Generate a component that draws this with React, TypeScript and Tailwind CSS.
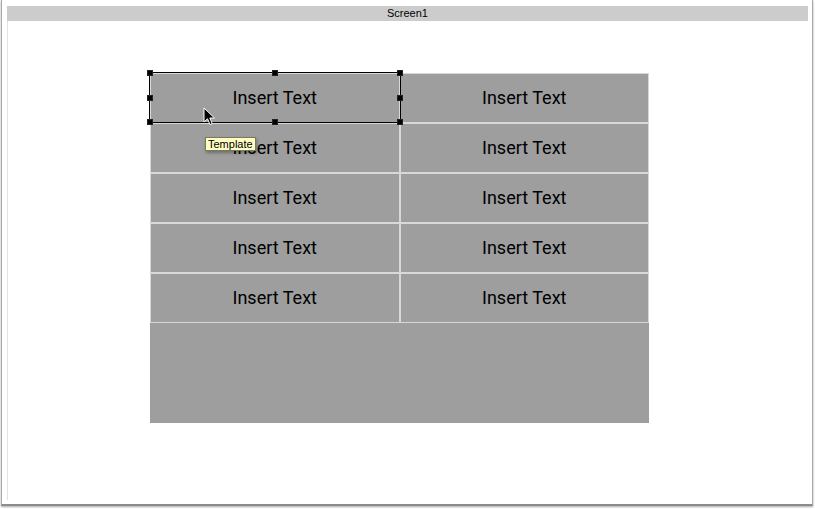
import React from 'react';

const rows = [0, 1, 2, 3, 4];

function Handle({ className }: { className: string }) {
  return (
    <span
      className={`absolute w-[6px] h-[6px] bg-black border border-[#222] ${className}`}
    />
  );
}

function Cursor() {
  return (
    <svg width="13" height="19" viewBox="0 0 13 19" className="absolute left-[-1px] top-[-1px]">
      <path
        d="M1 1 L1 15 L4.5 11.8 L7 17.5 L9.2 16.5 L6.8 11 L11.5 11 Z"
        fill="#000"
        stroke="#fff"
        strokeWidth="1"
        strokeLinejoin="round"
      />
    </svg>
  );
}

function Cell() {
  return (
    <div className="h-[50px] bg-[#9e9e9e] border border-[#d8d8d8] flex items-center justify-center pb-[2px]">
      <span className="text-[18px] text-black" style={{ fontFamily: 'Roboto, sans-serif' }}>
        Insert Text
      </span>
    </div>
  );
}

export default function App() {
  return (
    <div className="w-[815px] h-[509px] bg-white overflow-hidden" style={{ fontFamily: '"Liberation Sans", Arial, sans-serif' }}>
      {/* window frame */}
      <div className="ml-[1px] w-[812px] h-[506px] border-x border-b-2 border-x-[#a8a8a8] border-b-[#8c8c8c] shadow-[0_1px_2px_rgba(0,0,0,0.35)] bg-white pl-[5px] pt-[6px]">
        <div className="w-[801px] h-[15px] bg-[#cccccc] flex items-center justify-center text-[11px] leading-none text-black">
          Screen1
        </div>

        {/* canvas */}
        <div className="h-[479px] border-l border-[#e2e2e2] pl-[142px] pt-[52px]">
          <div className="relative w-[499px]">
            <div className="grid grid-cols-2">
              {rows.map((r) => (
                <React.Fragment key={r}>
                  <Cell />
                  <Cell />
                </React.Fragment>
              ))}
            </div>
            <div className="h-[100px] bg-[#9e9e9e]" />

            {/* selection box over the first cell */}
            <div className="absolute left-[-1px] top-[-1px] w-[252px] h-[51px] border border-black">
              <Handle className="left-[-3px] top-[-3px]" />
              <Handle className="left-[122px] top-[-3px]" />
              <Handle className="right-[-3px] top-[-3px]" />
              <Handle className="left-[-3px] top-[22px]" />
              <Handle className="right-[-3px] top-[22px]" />
              <Handle className="left-[-3px] bottom-[-3px]" />
              <Handle className="left-[122px] bottom-[-3px]" />
              <Handle className="right-[-3px] bottom-[-3px]" />
            </div>

            {/* pointer */}
            <div className="absolute left-[54px] top-[35px]">
              <Cursor />
            </div>

            {/* tooltip */}
            <div className="absolute left-[55px] top-[64px] h-[14px] px-[2px] bg-[#ffffc4] border border-[#7a7a5a] shadow-[1px_2px_3px_rgba(0,0,0,0.3)] flex items-center text-[11px] leading-none text-black">
              Template
            </div>
          </div>
        </div>
      </div>
    </div>
  );
}
